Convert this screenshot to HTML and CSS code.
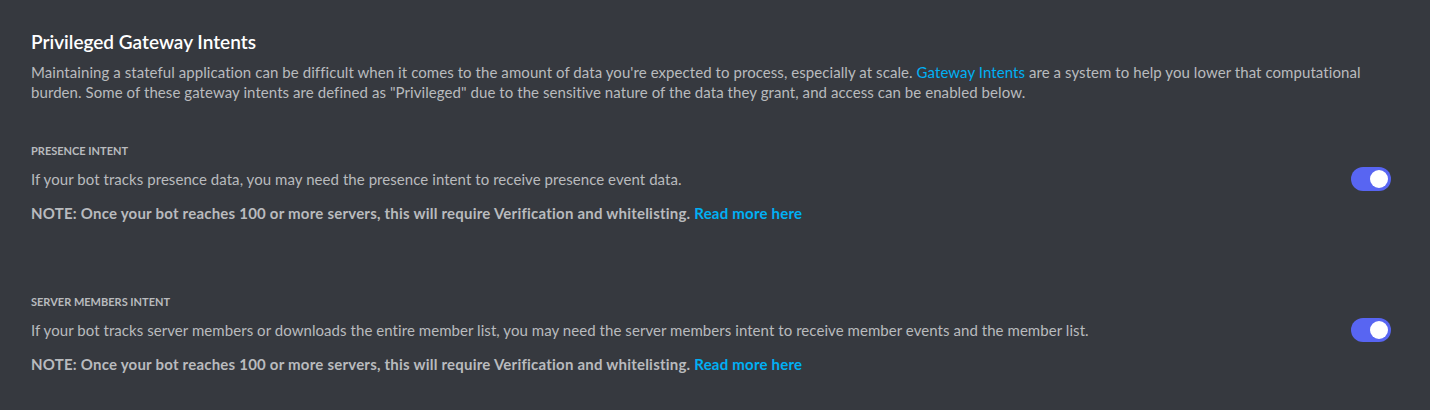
FILE: index.html
```html
<!DOCTYPE html>
<html>
<head>
<meta charset="utf-8">
<link rel="stylesheet" href="styles.css">
</head>
<body>
<div class="page">
  <h2 class="title">Privileged Gateway Intents</h2>
  <p class="intro">Maintaining a stateful application can be difficult when it comes to the amount of data you're expected to process, especially at scale. <a class="link">Gateway Intents</a> are a system to help you lower that computational burden. Some of these gateway intents are defined as "Privileged" due to the sensitive nature of the data they grant, and access can be enabled below.</p>

  <section class="intent">
    <h5 class="label">Presence Intent</h5>
    <div class="row">
      <p class="desc">If your bot tracks presence data, you may need the presence intent to receive presence event data.</p>
      <div class="toggle"><span class="knob"></span></div>
    </div>
    <p class="note">NOTE: Once your bot reaches 100 or more servers, this will require Verification and whitelisting. <a class="link">Read more here</a></p>
  </section>

  <section class="intent">
    <h5 class="label">Server Members Intent</h5>
    <div class="row">
      <p class="desc">If your bot tracks server members or downloads the entire member list, you may need the server members intent to receive member events and the member list.</p>
      <div class="toggle"><span class="knob"></span></div>
    </div>
    <p class="note">NOTE: Once your bot reaches 100 or more servers, this will require Verification and whitelisting. <a class="link">Read more here</a></p>
  </section>
</div>
</body>
</html>
```

FILE: styles.css
```css
html, body {
  margin: 0;
  padding: 0;
  background: #36393f;
  height: 100%;
}
body {
  font-family: Lato, "Open Sans", sans-serif;
  color: #b9bbbe;
}
.page {
  padding: 30px 39px 0 31px;
}
.title {
  margin: 0;
  font-size: 19px;
  line-height: 24px;
  font-weight: 600;
  color: #ffffff;
}
.intro {
  margin: 8px 0 0;
  font-size: 15px;
  line-height: 20px;
  letter-spacing: 0.07px;
  color: #b9bbbe;
}
.link {
  color: #00b0f4;
  cursor: pointer;
}
.intent {
  margin-top: 41px;
}
.intent + .intent {
  margin-top: 71px;
}
.label {
  margin: 0;
  font-size: 11px;
  line-height: 16px;
  font-weight: 700;
  text-transform: uppercase;
  color: #b9bbbe;
}
.row {
  display: flex;
  align-items: center;
  justify-content: space-between;
  margin-top: 8px;
}
.desc {
  margin: 0;
  font-size: 15px;
  line-height: 24px;
  letter-spacing: 0.06px;
}
.toggle {
  width: 40px;
  height: 24px;
  border-radius: 12px;
  background: #5865f2;
  display: flex;
  align-items: center;
  justify-content: flex-end;
  padding: 0 3px;
  box-sizing: border-box;
  flex-shrink: 0;
}
.knob {
  width: 18px;
  height: 18px;
  border-radius: 50%;
  background: #ffffff;
}
.note {
  margin: 12px 0 0;
  font-size: 15px;
  line-height: 20px;
  font-weight: 700;
  letter-spacing: 0.22px;
}
```
